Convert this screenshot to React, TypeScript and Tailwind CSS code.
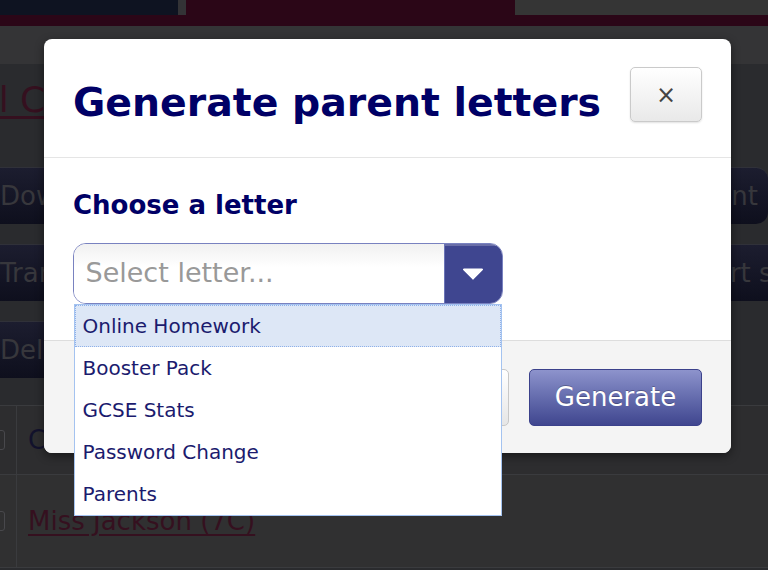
import React from 'react';

const letters = ['Online Homework', 'Booster Pack', 'GCSE Stats', 'Password Change', 'Parents'];

function PageBehind() {
  return (
    <div className="flex flex-col">
      {/* top nav, dimmed by the backdrop */}
      <div className="flex h-[15px]">
        <div className="w-[178px] bg-[#0e1321]" />
        <div className="w-[8px] bg-[#333336]" />
        <div className="w-[329px] bg-[#2b0617]" />
        <div className="flex-1 bg-[#353535]" />
      </div>
      <div className="h-[11px] bg-[#2b0617]" />
      <div className="h-[38px] bg-[#343436]" />

      <div className="flex h-[341px] flex-col">
        <div className="h-[103px] overflow-hidden pt-[18px]">
          <span className="-ml-[36px] block text-[36px] leading-none text-[#35101f] underline underline-offset-[4px]">
            All Classes
          </span>
        </div>
        <div className="flex flex-col gap-[20px]">
          <div className="flex h-[57px] justify-between">
            <div className="-ml-[20px] flex items-center rounded-[10px] border-t border-[#303139] bg-gradient-to-b from-[#1c1d2f] to-[#0e0f1d] px-[20px] text-[26px] text-[#37373c]">
              Download letters
            </div>
            <div className="flex items-center rounded-[12px] border-t border-[#303139] bg-gradient-to-b from-[#1c1d2f] to-[#0e0f1d] pl-[16px] pr-[10px] text-[26px] text-[#37373c]">
              Print
            </div>
          </div>
          <div className="flex h-[57px] justify-between">
            <div className="-ml-[20px] flex items-center rounded-[10px] border-t border-[#303139] bg-gradient-to-b from-[#1c1d2f] to-[#0e0f1d] px-[20px] text-[26px] text-[#37373c]">
              Transfer
            </div>
            <div className="-mr-[120px] flex items-center rounded-[12px] border-t border-[#303139] bg-gradient-to-b from-[#1c1d2f] to-[#0e0f1d] px-[16px] text-[26px] text-[#37373c]">
              Export students
            </div>
          </div>
          <div className="flex h-[57px] justify-between">
            <div className="-ml-[20px] flex items-center rounded-[10px] border-t border-[#303139] bg-gradient-to-b from-[#1c1d2f] to-[#0e0f1d] px-[20px] text-[26px] text-[#37373c]">
              Delete
            </div>
          </div>
        </div>
      </div>

      {/* class table */}
      <div className="border-t border-[#3a3b3e]">
        <div className="flex h-[69px] border-b border-[#3a3b3e] bg-[#2d2d2f]">
          <div className="flex w-[17px] items-center border-r border-[#3a3b3e]">
            <span className="-ml-[15px] h-[20px] w-[20px] rounded-[3px] border border-[#48484c]" />
          </div>
          <div className="flex items-center pl-[11px] text-[26px] text-[#12122c]">Class</div>
        </div>
        <div className="flex h-[93px] border-b border-[#3a3b3e] bg-[#303031]">
          <div className="flex w-[17px] items-center border-r border-[#3a3b3e]">
            <span className="-ml-[15px] h-[20px] w-[20px] rounded-[3px] border border-[#48484c]" />
          </div>
          <div className="flex items-center pl-[11px] text-[26px] text-[#35101f] underline underline-offset-[4px]">
            Miss Jackson (7C)
          </div>
        </div>
      </div>
    </div>
  );
}

function LetterSelect() {
  return (
    <div className="relative w-[430px]">
      <div className="flex h-[61px] overflow-hidden rounded-[13px] border-[1.5px] border-[#7982c0]">
        <div className="flex flex-1 items-center bg-gradient-to-b from-[#f1f1f1] to-white to-[40%] pl-[12px] text-[27px] text-[#999]">
          Select letter...
        </div>
        <div className="flex w-[58px] items-center justify-center border-l border-[#6b74b6] bg-[#3f4690] shadow-[inset_0_2px_0_rgba(255,255,255,0.22)]">
          <svg width="22" height="13" viewBox="0 0 22 13">
            <path d="M2 1.5h18a1 1 0 0 1 .8 1.6l-9 9a1 1 0 0 1-1.6 0l-9-9A1 1 0 0 1 2 1.5z" fill="#fff" />
          </svg>
        </div>
      </div>
      <ul className="absolute left-[1px] top-full z-10 w-[428px] border border-[#a4c3f0] bg-white">
        {letters.map((l, i) => (
          <li
            key={l}
            className={
              i === 0
                ? 'h-[42px] border border-dotted border-[#8fb1ea] bg-[#dde7f6] pl-[7px] text-[20px] leading-[40px] text-[#1b1b6e]'
                : 'h-[42px] pl-[8px] text-[20px] leading-[42px] text-[#1b1b6e]'
            }
          >
            {l}
          </li>
        ))}
      </ul>
    </div>
  );
}

export default function App() {
  return (
    <div className="relative h-[570px] w-[768px] overflow-hidden bg-[#2a2b2e] font-['DejaVu_Sans',Verdana,sans-serif]">
      <PageBehind />

      <div className="absolute left-[44px] top-[39px] w-[687px] rounded-[8px] bg-white shadow-[0_3px_10px_rgba(0,0,0,0.45)]">
        <div className="flex h-[119px] items-start justify-between border-b border-[#e5e5e5] px-[29px]">
          <h1 className="mt-[44px] text-[39.4px] font-bold leading-none text-[#000066]">Generate parent letters</h1>
          <button className="mt-[28px] flex h-[55px] w-[72px] items-center justify-center rounded-[5px] border border-[#cacaca] bg-gradient-to-b from-white to-[#e9e9e9] text-[24px] leading-none text-[#444] shadow-[0_1px_2px_rgba(0,0,0,0.12)]">
            ×
          </button>
        </div>

        <div className="h-[182px] px-[29px] pt-[34px]">
          <h2 className="text-[26px] font-bold leading-none text-[#000066]">Choose a letter</h2>
          <div className="mt-[25px] -ml-[0.5px]">
            <LetterSelect />
          </div>
        </div>

        <div className="flex h-[113px] items-center justify-end gap-[20px] rounded-b-[8px] border-t border-[#dddddd] bg-[#f4f4f4] px-[29px]">
          <button className="flex h-[57px] items-center rounded-[5px] border border-[#c8c8c8] bg-gradient-to-b from-white to-[#e6e6e6] px-[26px] text-[26px] text-[#333]">
            Close
          </button>
          <button className="flex h-[57px] w-[173px] items-center justify-center rounded-[5px] border border-[#3b418b] bg-gradient-to-b from-[#8d93cc] to-[#40468f] text-[26px] text-white [text-shadow:0_-1px_0_rgba(0,0,0,0.25)]">
            Generate
          </button>
        </div>
      </div>
    </div>
  );
}
